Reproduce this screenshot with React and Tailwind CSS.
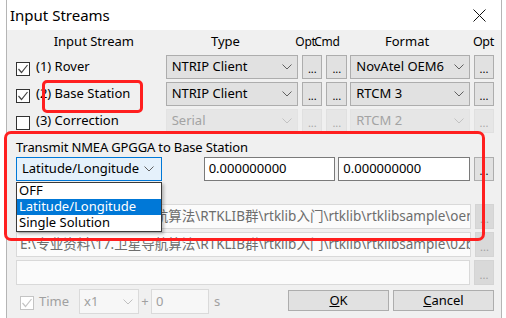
import React from 'react';

const Chevron = ({ color = '#606060' }) => (
  <svg width="10" height="6" viewBox="0 0 10 6">
    <polyline points="0.5,0.5 5,5 9.5,0.5" fill="none" stroke={color} strokeWidth="1" />
  </svg>
);

const Check = ({ checked, disabled }) => (
  <div
    className={`flex h-[14px] w-[14px] shrink-0 items-center justify-center border bg-white ${
      disabled ? 'border-[#c4c4c4]' : 'border-[#333333]'
    }`}
  >
    {checked && (
      <svg width="12" height="12" viewBox="0 0 12 12">
        <polyline
          points="1.5,6 4.5,9.5 10.5,2"
          fill="none"
          stroke={disabled ? '#c4c4c4' : '#444444'}
          strokeWidth="1.2"
        />
      </svg>
    )}
  </div>
);

const Combo = ({ className = '', children, disabled }) => (
  <div
    className={`flex h-full items-center justify-between border pl-[5px] pr-[5px] ${
      disabled ? 'border-[#e3e3e3] bg-[#e6e6e6] text-[#a3a3a3]' : 'border-[#adadad] bg-[#e1e1e1] text-black'
    } ${className}`}
  >
    <span className="whitespace-nowrap">{children}</span>
    <Chevron color={disabled ? '#c2c2c2' : '#606060'} />
  </div>
);

const Dots = ({ className = '', disabled, dark }) => (
  <div
    className={`flex h-full items-center justify-center border pt-[3px] text-[11px] leading-none ${
      disabled
        ? dark
          ? 'border-[#d4d4d4] bg-[#d9d9d9] text-[#a0a0a0]'
          : 'border-[#e0e0e0] bg-[#e6e6e6] text-[#a8a8a8]'
        : 'border-[#adadad] bg-[#e1e1e1] text-black'
    } ${className}`}
  >
    ...
  </div>
);

const streams = [
  { n: '(1) Rover', on: true, type: 'NTRIP Client', fmt: 'NovAtel OEM6' },
  { n: '(2) Base Station', on: true, type: 'NTRIP Client', fmt: 'RTCM 3' },
  { n: '(3) Correction', on: false, type: 'Serial', fmt: 'RTCM 2', off: true },
];

const path = 'E:\\专业资料\\17.卫星导航算法\\RTKLIB群\\rtklib入门\\rtklib\\rtklibsample\\';

export default function App() {
  return (
    <div className="relative h-[318px] w-[506px] overflow-hidden bg-white text-[13px] text-black font-['Noto_Sans','Noto_Sans_CJK_SC',sans-serif]">
      <div className="ml-[6px] flex h-[318px] w-[496px] flex-col border-x border-[#b5b5b5]">
        {/* title bar */}
        <div className="flex h-[30px] shrink-0 items-center justify-between bg-white pl-[3px] pr-[15px]">
          <span className="text-[15px]">Input Streams</span>
          <svg width="13" height="13" viewBox="0 0 13 13">
            <path d="M0.5 0.5 L12.5 12.5 M12.5 0.5 L0.5 12.5" stroke="#111" strokeWidth="1" />
          </svg>
        </div>

        <div className="flex flex-1 flex-col bg-[#f0f0f0] pl-[9px] pr-[7px]">
          {/* header */}
          <div className="flex h-[24px] items-center">
            <span className="w-[150px] pl-[6px] text-center">Input Stream</span>
            <span className="w-[130px] pr-[10px] text-center">Type</span>
            <span className="w-[19px] text-[12px] tracking-[-0.3px]">Opt</span>
            <span className="w-[29px] text-[12px] tracking-[-0.3px]">Cmd</span>
            <span className="w-[128px] text-center">Format</span>
            <span className="ml-[2px] text-[12.5px] tracking-[-0.3px]">Opt</span>
          </div>

          {/* stream rows */}
          <div className="mt-[1px] flex flex-col gap-[3px]">
            {streams.map((s) => (
              <div key={s.n} className="flex h-[24px] items-center">
                <div className="flex w-[150px] items-center pt-[3px]">
                  <Check checked={s.on} />
                  <span className="ml-[6px] -mt-[3px]">{s.n}</span>
                </div>
                <Combo className="w-[133px]" disabled={s.off}>{s.type}</Combo>
                <Dots className="ml-[4px] w-[20px]" disabled={s.off} />
                <Dots className="ml-[4px] w-[21px]" disabled={s.off} />
                <Combo className="ml-[3px] w-[120px]" disabled={s.off}>{s.fmt}</Combo>
                <Dots className="ml-[4px] w-[20px]" disabled={s.off} />
              </div>
            ))}
          </div>

          {/* NMEA */}
          <div className="mt-[6px] flex h-[18px] items-center tracking-[-0.15px]">Transmit NMEA GPGGA to Base Station</div>
          <div className="flex h-[24px] items-stretch">
            <div className="flex w-[146px] items-center justify-between border border-[#0078d7] bg-[#e5f1fb] pl-[5px] pr-[7px]">
              <span>Latitude/Longitude</span>
              <Chevron />
            </div>
            <div className="ml-[42px] flex w-[132px] items-center border border-[#7a7a7a] bg-white pl-[4px]">
              0.000000000
            </div>
            <div className="ml-[3px] flex w-[132px] items-center border border-[#7a7a7a] bg-white pl-[4px]">
              0.000000000
            </div>
            <Dots className="ml-[4px] w-[20px]" />
          </div>

          {/* paths */}
          <div className="mt-[23px] flex flex-col gap-[3px]">
            {[path + 'oem6.log', path + '02base.log', ''].map((p, i) => (
              <div key={i} className="flex h-[25px]">
                <div className="w-[455px] border border-[#d9d9d9] bg-[#fbfbfb] pl-[3px]">
                  <div className="w-full overflow-hidden whitespace-nowrap text-[13.5px] leading-[23px] text-[#6d6d6d]">{p}</div>
                </div>
                <Dots className="ml-[4px] w-[20px]" disabled dark />
              </div>
            ))}
          </div>

          {/* bottom */}
          <div className="mt-[4px] flex h-[25px] items-start">
            <div className="flex h-full w-[63px] items-center pl-[4px] pt-[2px]">
              <Check checked disabled />
              <span className="ml-[5px] -mt-[2px] text-[#a0a0a0]">Time</span>
            </div>
            <div className="flex h-full w-[60px] items-center justify-between border border-[#dadada] bg-[#f7f7f7] pl-[4px] pr-[5px] text-[#a0a0a0]">
              <span>x1</span>
              <Chevron color="#c0c0c0" />
            </div>
            <span className="flex h-full w-[12px] items-center justify-center text-[#a0a0a0]">+</span>
            <div className="flex h-full w-[58px] items-center border border-[#dadada] bg-[#f7f7f7] pl-[4px] text-[#a0a0a0]">
              0
            </div>
            <span className="ml-[5px] flex h-full items-center text-[#a0a0a0]">s</span>
            <div className="ml-auto mt-[1px] flex h-[21px] w-[101px] items-center justify-center border border-[#adadad] bg-[#e1e1e1]">
              <span><u>O</u>K</span>
            </div>
            <div className="ml-[4px] mt-[1px] flex h-[21px] w-[101px] items-center justify-center border border-[#adadad] bg-[#e1e1e1]">
              <span><u>C</u>ancel</span>
            </div>
          </div>
        </div>
      </div>

      {/* dropdown list */}
      <div className="absolute left-[16px] top-[182px] flex w-[146px] flex-col border border-[#3a3a3a] bg-white shadow-[2px_2px_3px_rgba(0,0,0,0.25)]">
        <div className="flex h-[16px] items-center pl-[2px]">OFF</div>
        <div className="flex h-[16px] items-center bg-[#0078d7] pl-[2px] text-white">Latitude/Longitude</div>
        <div className="flex h-[16px] items-center pl-[2px]">Single Solution</div>
      </div>

      {/* red annotations */}
      <div className="absolute left-[42px] top-[80px] h-[33px] w-[101px] rounded-[5px] border-[3px] border-[#ff1f1f]" />
      <div className="absolute left-[4px] top-[131px] h-[110px] w-[481px] rounded-[7px] border-[3px] border-[#ff1f1f]" />
    </div>
  );
}
